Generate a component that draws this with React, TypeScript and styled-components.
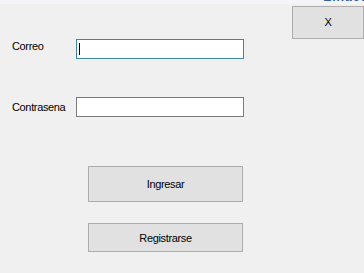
import styled, { createGlobalStyle } from 'styled-components';

const GlobalStyle = createGlobalStyle`
  html, body {
    margin: 0;
    padding: 0;
    background: #f0f0f0;
  }
  body {
    font-family: "Liberation Sans", Arial, sans-serif;
    font-size: 11px;
    color: #000;
  }
`;

const Window = styled.div`
  width: 364px;
  height: 273px;
  overflow: hidden;
  background: #f0f0f0;
  display: flex;
  flex-direction: column;
`;

const TopStrip = styled.div`
  height: 4px;
  background: #f4f4fa;
  overflow: hidden;
  display: flex;
  justify-content: flex-end;
`;

const CutLink = styled.span`
  margin-top: -9px;
  margin-right: -4px;
  font-size: 12px;
  line-height: 13px;
  font-weight: bold;
  color: #2d5fa6;
  letter-spacing: 1px;
`;

const Header = styled.div`
  display: flex;
  justify-content: flex-end;
  margin-top: 2px;
`;

const CloseButton = styled.button`
  width: 72px;
  height: 33px;
  box-sizing: border-box;
  border: 1px solid #adadad;
  background: #e1e1e1;
  font-family: inherit;
  font-size: 11px;
  letter-spacing: -0.3px;
  padding: 0 0 1px 0;
  color: #000;
`;

const Form = styled.div`
  display: flex;
  flex-direction: column;
  padding-left: 12px;
`;

const Row = styled.div<{ $top: number }>`
  display: flex;
  align-items: flex-start;
  margin-top: ${(p) => p.$top}px;
`;

const Label = styled.label<{ $offset: number }>`
  width: 64px;
  line-height: 13px;
  padding-top: ${(p) => p.$offset}px;
  letter-spacing: -0.35px;
`;

const Field = styled.div<{ $focused?: boolean }>`
  width: 168px;
  height: 20px;
  box-sizing: border-box;
  background: #fff;
  border: 1px solid ${(p) => (p.$focused ? '#3d86a8' : '#7a7a7a')};
  position: relative;
`;

const Caret = styled.span`
  position: absolute;
  left: 2px;
  top: 3px;
  width: 1px;
  height: 12px;
  background: #000;
`;

const Actions = styled.div`
  display: flex;
  flex-direction: column;
  padding-left: 88px;
`;

const ActionButton = styled.button<{ $top: number; $height: number }>`
  width: 155px;
  height: ${(p) => p.$height}px;
  margin-top: ${(p) => p.$top}px;
  box-sizing: border-box;
  border: 1px solid #adadad;
  background: #e1e1e1;
  font-family: inherit;
  font-size: 11px;
  letter-spacing: -0.35px;
  color: #000;
  padding: 0;
`;

export default function App() {
  return (
    <Window>
      <GlobalStyle />
      <TopStrip>
        <CutLink>Enlace</CutLink>
      </TopStrip>
      <Header>
        <CloseButton>X</CloseButton>
      </Header>
      <Form>
        <Row $top={0}>
          <Label $offset={1}>Correo</Label>
          <Field $focused>
            <Caret />
          </Field>
        </Row>
        <Row $top={38}>
          <Label $offset={4}>Contrasena</Label>
          <Field />
        </Row>
      </Form>
      <Actions>
        <ActionButton $top={49} $height={36}>Ingresar</ActionButton>
        <ActionButton $top={21} $height={29}>Registrarse</ActionButton>
      </Actions>
    </Window>
  );
}
